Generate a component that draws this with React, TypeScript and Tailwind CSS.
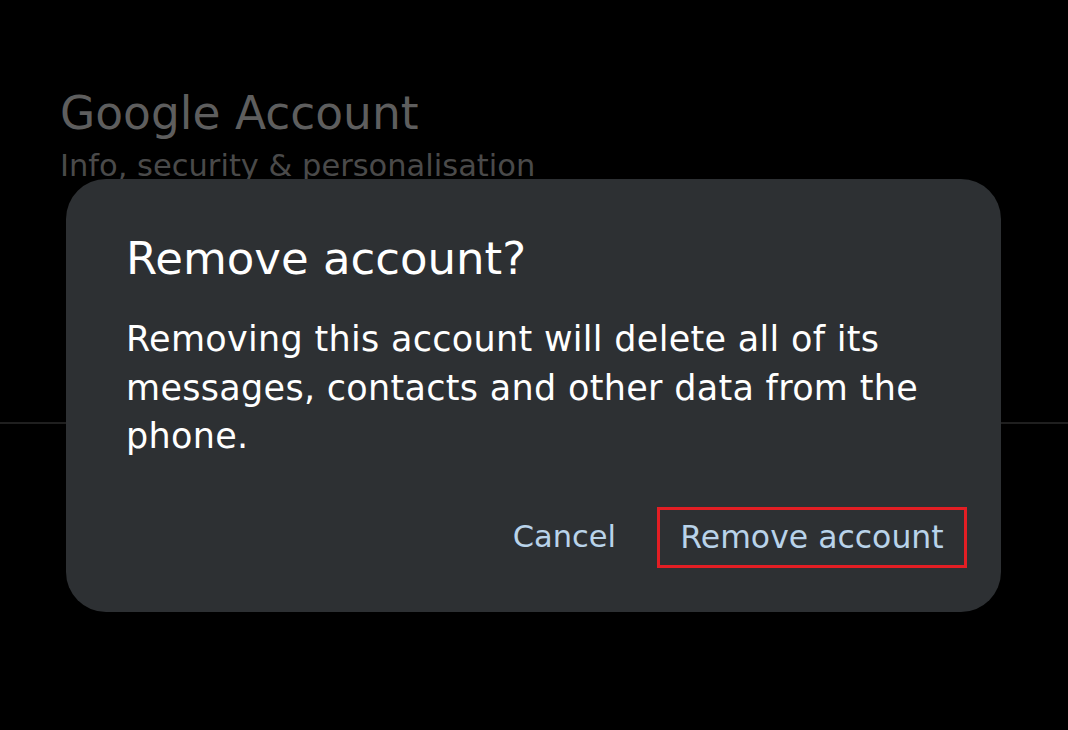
import React from 'react';

const font = { fontFamily: '"DejaVu Sans", "Liberation Sans", Arial, sans-serif' };

const App: React.FC = () => {
  return (
    <div className="relative w-[1068px] h-[730px] overflow-hidden bg-black" style={font}>
      {/* background settings page */}
      <div className="pt-[86px] pl-[60px]">
        <h1 className="text-[45.5px] leading-[56px] text-[#5e5e5e]">Google Account</h1>
        <p className="mt-[4px] text-[30.5px] leading-[40px] text-[#4a4a4a]">Info, security &amp; personalisation</p>
      </div>
      <div className="mt-[236px] h-[2px] bg-[#1f1f1f]" />

      {/* dialog */}
      <div className="absolute left-[66px] top-[179px] w-[935px] h-[433px] rounded-[40px] bg-[#2d3033] pl-[60px] pr-[50px] pt-[54px]">
        <h2 className="text-[45px] leading-[52px] text-white">Remove account?</h2>
        <p className="mt-[30px] text-[35px] leading-[48.5px] tracking-[0.3px] text-white">
          Removing this account will delete all of its messages, contacts and other data from the phone.
        </p>
        <div className="mt-[46px] flex items-center justify-end gap-[41px]">
          <button type="button" className="text-[30.5px] leading-[40px] text-[#b9d3ea]">Cancel</button>
          <button
            type="button"
            className="-mr-[16px] h-[61px] w-[310px] border-[3px] border-[#e31e24] text-[31.5px] leading-[40px] text-[#b9d3ea]"
          >
            Remove account
          </button>
        </div>
      </div>
    </div>
  );
};

export default App;
